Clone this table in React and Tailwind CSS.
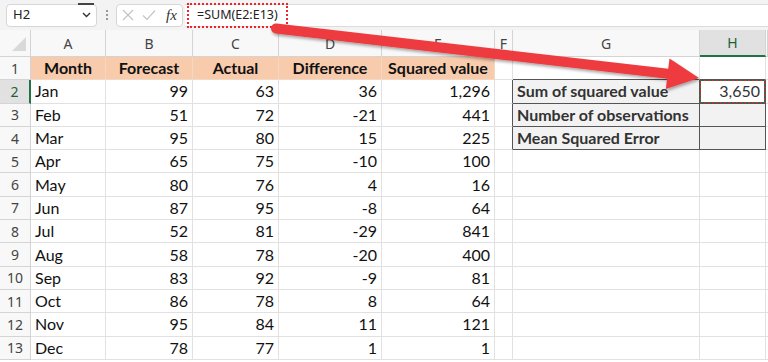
import React from "react";

const rows = [
  ["Jan", 99, 63, 36, "1,296"],
  ["Feb", 51, 72, -21, 441],
  ["Mar", 95, 80, 15, 225],
  ["Apr", 65, 75, -10, 100],
  ["May", 80, 76, 4, 16],
  ["Jun", 87, 95, -8, 64],
  ["Jul", 52, 81, -29, 841],
  ["Aug", 58, 78, -20, 400],
  ["Sep", 83, 92, -9, 81],
  ["Oct", 86, 78, 8, 64],
  ["Nov", 95, 84, 11, 121],
  ["Dec", 78, 77, 1, 1],
];

const summary = ["Sum of squared value", "Number of observations", "Mean Squared Error"];

const grid = "grid grid-cols-[31px_75px_87px_86px_103px_113px_18px_187px_66px_2px]";
const cell = "h-[23.3px] border-r border-b border-[#e1e1e1] flex items-center px-[4px] overflow-hidden whitespace-nowrap";

const FormulaBar = () => (
  <div className="h-[30px] bg-[#f3f3f3] flex items-center pl-[6px] relative">
    {/* name box */}
    <div className="relative w-[91px] h-[23px] bg-white border border-[#d6d6d6] rounded-[4px] flex items-center justify-between pl-[6px] pr-[5px]">
      <span className="text-[13px] text-[#222] font-['Noto_Sans',sans-serif]">H2</span>
      <svg width="9" height="6" viewBox="0 0 9 6">
        <polyline points="1,1 4.5,4.5 8,1" fill="none" stroke="#333" strokeWidth="1.4" />
      </svg>
      <div className="absolute top-[-2px] right-[2px] w-[16px] h-[2px] bg-[#444]" />
    </div>
    {/* dots */}
    <div className="w-[19px] flex flex-col items-center gap-[2px]">
      <div className="w-[2px] h-[2px] bg-[#999]" />
      <div className="w-[2px] h-[2px] bg-[#999]" />
      <div className="w-[2px] h-[2px] bg-[#999]" />
    </div>
    {/* X check fx */}
    <div className="w-[67px] h-[23px] bg-white border border-[#d6d6d6] rounded-[4px] flex items-center pl-[5px] gap-[8px]">
      <svg width="12" height="12" viewBox="0 0 12 12">
        <path d="M1 1 L11 11 M11 1 L1 11" stroke="#c4c4c4" strokeWidth="1.2" />
      </svg>
      <svg width="14" height="12" viewBox="0 0 14 12">
        <path d="M1 6.5 L5 10.5 L13 1.5" fill="none" stroke="#c4c4c4" strokeWidth="1.2" />
      </svg>
      <span className="ml-[2px] text-[15px] italic text-[#333] font-['Liberation_Serif',serif] leading-none">fx</span>
    </div>
    {/* formula input */}
    <div className="flex-1 h-[23px] ml-[2px] bg-white border-y border-[#dcdcdc] flex items-center">
      <div className="ml-[2px] h-[25px] px-[8px] border-2 border-dotted border-[#e8262b] flex items-center">
        <span className="text-[12.5px] text-[#222] font-['Noto_Sans',sans-serif]">=SUM(E2:E13)</span>
      </div>
    </div>
  </div>
);

const ColHeaders = () => {
  const letters = ["A", "B", "C", "D", "E", "F", "G", "H", ""];
  return (
    <div className={grid + " h-[27px] bg-[#f8f8f8] font-['Noto_Sans',sans-serif] text-[14px] text-[#444]"}>
      <div className="border-r border-b border-[#d4d4d4] relative">
        <svg className="absolute right-[4px] bottom-[5px]" width="14" height="14" viewBox="0 0 14 14">
          <polygon points="14,0 14,14 0,14" fill="#d9d9d9" />
        </svg>
      </div>
      {letters.map((l, i) =>
        l === "H" ? (
          <div key={i} className="bg-[#e1e1e1] border-r border-[#d4d4d4] border-b-2 border-b-[#217346] flex items-center justify-center text-[#1e5e3b]">
            {l}
          </div>
        ) : (
          <div key={i} className="border-r border-b border-[#d4d4d4] flex items-center justify-center">
            {l}
          </div>
        )
      )}
    </div>
  );
};

const RowNum = ({ n, active }) =>
  active ? (
    <div className="h-[23.3px] bg-[#e1e1e1] border-b border-[#d4d4d4] border-r-2 border-r-[#217346] flex items-center justify-center text-[14px] text-[#1e5e3b] font-['Noto_Sans',sans-serif]">
      {n}
    </div>
  ) : (
    <div className="h-[23.3px] bg-[#f8f8f8] border-r border-b border-[#d4d4d4] flex items-center justify-center text-[14px] text-[#444] font-['Noto_Sans',sans-serif]">
      {n}
    </div>
  );

const Arrow = () => (
  <svg className="absolute left-0 top-0 pointer-events-none" width="768" height="362" viewBox="0 0 768 362">
    <defs>
      <filter id="sh" x="-10%" y="-50%" width="120%" height="200%">
        <feDropShadow dx="1" dy="2" stdDeviation="1.5" floodColor="#000" floodOpacity="0.35" />
      </filter>
    </defs>
    <g filter="url(#sh)" fill="#ee3b3f">
      <line x1="276" y1="28.5" x2="670" y2="74" stroke="#ee3b3f" strokeWidth="10" strokeLinecap="round" />
      <polygon points="699,78 669.5,58.5 665.8,89" />
    </g>
  </svg>
);

export default function App() {
  return (
    <div className="w-[768px] h-[362px] overflow-hidden relative bg-white">
      <FormulaBar />
      <ColHeaders />
      <div className={grid + " font-['Lato',sans-serif] text-[16px] text-[#111]"}>
        {/* row 1 */}
        <RowNum n={1} />
        {["Month", "Forecast", "Actual", "Difference", "Squared value"].map((h) => (
          <div key={h} className="h-[23.3px] bg-[#f8cbad] border-r border-b border-[#f2d9c6] flex items-center justify-center px-[2px] font-bold whitespace-nowrap">
            {h}
          </div>
        ))}
        <div className={cell} />
        <div className={cell + " border-b-[#555]"} />
        <div className={cell + " border-b-[#555]"} />
        <div className={cell} />
        {rows.map((r, ri) => {
          const rowNo = ri + 2;
          const s = ri < 3;
          return (
            <React.Fragment key={rowNo}>
              <RowNum n={rowNo} active={rowNo === 2} />
              <div className={cell}>{r[0]}</div>
              <div className={cell + " justify-end"}>{r[1]}</div>
              <div className={cell + " justify-end"}>{r[2]}</div>
              <div className={cell + " justify-end"}>{r[3]}</div>
              <div className={cell + " justify-end"}>{r[4]}</div>
              <div className={cell + (s ? " border-r-[#555]" : "")} />
              {s ? (
                <div className={cell + " bg-[#f2f2f2] border-r-[#555] border-b-[#555] font-bold text-[#333]"}>
                  {summary[ri]}
                </div>
              ) : (
                <div className={cell} />
              )}
              {s ? (
                ri === 0 ? (
                  <div className={cell + " relative bg-white border-r-[#555] border-b-[#555] justify-end text-[#333]"}>
                    <div className="absolute -inset-[1px] border-2 border-[#217346]" />
                    <div className="absolute -inset-[1px] border-2 border-dotted border-[#e8262b]" />
                    <span className="relative pr-[1px]">3,650</span>
                  </div>
                ) : (
                  <div className={cell + " bg-[#f2f2f2] border-r-[#555] border-b-[#555]"} />
                )
              ) : (
                <div className={cell} />
              )}
              <div className={cell} />
            </React.Fragment>
          );
        })}
      </div>
      <Arrow />
    </div>
  );
}
